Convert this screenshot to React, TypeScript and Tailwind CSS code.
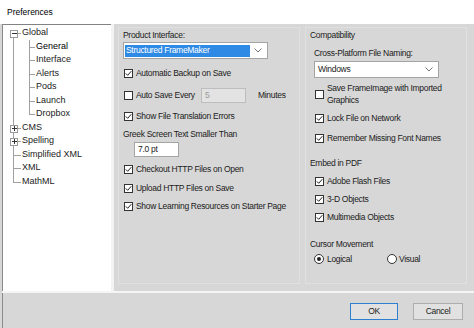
import type { ReactNode } from 'react';

const narrow = "font-['Liberation_Sans',sans-serif] text-[8.5px] tracking-[-0.3px]";

function Check({ checked }: { checked: boolean }) {
  return (
    <span className="w-[9px] h-[9px] border border-[#333] bg-white flex-shrink-0 flex items-center justify-center">
      {checked && (
        <svg width="7" height="7" viewBox="0 0 7 7">
          <path d="M0.8 3.4 L2.7 5.3 L6.3 1.2" fill="none" stroke="#222" strokeWidth="1" />
        </svg>
      )}
    </span>
  );
}

function CheckRow({ checked, children, className = '' }: { checked: boolean; children: ReactNode; className?: string }) {
  return (
    <div className={`flex items-center gap-[3px] h-[14px] ml-[1px] ${className}`}>
      <Check checked={checked} />
      <span className="leading-none whitespace-nowrap">{children}</span>
    </div>
  );
}

function Chevron() {
  return (
    <svg width="8" height="5" viewBox="0 0 8 5" className="flex-shrink-0">
      <path d="M0.5 0.5 L4 4 L7.5 0.5" fill="none" stroke="#777" strokeWidth="1" />
    </svg>
  );
}

function Radio({ on }: { on: boolean }) {
  return (
    <span className="w-[10px] h-[10px] rounded-full border border-[#333] bg-white flex-shrink-0 flex items-center justify-center">
      {on && <span className="w-[4px] h-[4px] rounded-full bg-[#222]" />}
    </span>
  );
}

type TreeItem = { label: string; level: 0 | 1; box?: '+' | '-'; first?: boolean; last?: boolean; selected?: boolean };

const tree: TreeItem[] = [
  { label: 'Global', level: 0, box: '-', first: true },
  { label: 'General', level: 1, first: true, selected: true },
  { label: 'Interface', level: 1 },
  { label: 'Alerts', level: 1 },
  { label: 'Pods', level: 1 },
  { label: 'Launch', level: 1 },
  { label: 'Dropbox', level: 1, last: true },
  { label: 'CMS', level: 0, box: '+' },
  { label: 'Spelling', level: 0, box: '+' },
  { label: 'Simplified XML', level: 0 },
  { label: 'XML', level: 0 },
  { label: 'MathML', level: 0, last: true },
];

function TreeLines({ item }: { item: TreeItem }) {
  const w = item.level === 0 ? 19 : 33;
  const mid = 6.5;
  return (
    <svg width={w} height="13.5" className="flex-shrink-0 overflow-visible" shapeRendering="crispEdges">
      {/* trunk line */}
      <line
        x1="10.5"
        x2="10.5"
        y1={item.first && item.level === 0 ? mid : 0}
        y2={item.last && item.level === 0 ? mid : 14}
        stroke="#a0a0a0"
      />
      {item.level === 0 && <line x1="10" x2="18" y1={mid + 0.5} y2={mid + 0.5} stroke="#a0a0a0" />}
      {item.level === 1 && (
        <>
          <line x1="26.5" x2="26.5" y1="0" y2={item.last ? mid : 14} stroke="#a0a0a0" />
          <line x1="26" x2="32" y1={mid + 0.5} y2={mid + 0.5} stroke="#a0a0a0" />
        </>
      )}
      {item.box && (
        <>
          <rect x="7.5" y={mid - 2.5} width="7" height="7" fill="white" stroke="#9a9a9a" />
          <line x1="9" x2="14" y1={mid + 1} y2={mid + 1} stroke="#333" />
          {item.box === '+' && <line x1="11.5" x2="11.5" y1={mid - 1.5} y2={mid + 3.5} stroke="#333" />}
        </>
      )}
    </svg>
  );
}

export default function App() {
  return (
    <div className="w-[474px] h-[328px] bg-[#d7d7d7] flex flex-col overflow-hidden text-[#1b1b1b]">
      {/* Title bar */}
      <div className="h-[24px] bg-white flex items-center pl-[7px] font-['Liberation_Sans',sans-serif] text-[8.5px] text-black">
        Preferences
      </div>

      {/* Body */}
      <div className="flex h-[267px] border-l border-[#8a8a8a] ml-[2px]">
        {/* Tree */}
        <div className="w-[108px] bg-white border-t border-[#828282] pt-[1px] font-['Liberation_Sans',sans-serif] text-[9px]">
          {tree.map((item) => (
            <div key={item.label} className="flex items-center h-[13.5px]">
              <TreeLines item={item} />
              <span className={`leading-none whitespace-nowrap ${item.selected ? 'text-black font-medium' : 'text-[#222]'}`}>
                {item.label}
              </span>
            </div>
          ))}
        </div>
        <div className="w-[3px] bg-[#f3f3f3]" />

        {/* Settings panel */}
        <div className={`flex-1 flex gap-[5px] pl-[4px] pt-[3px] ${narrow}`}>
          {/* Left column */}
          <div className="w-[182px] h-[257px] border border-[#e0e0e0] pl-[4px] pt-[1px] flex flex-col">
            <div className="h-[12px] flex items-center">Product Interface:</div>
            <div className="mt-[1px] w-[145px] h-[17px] bg-white border border-[#a4a4a4] flex items-center pl-[1px] pr-[5px] gap-[4px]">
              <div className="flex-1 h-[12px] bg-[#2f8ae6] text-white flex items-center pl-[1px] leading-none">
                Structured FrameMaker
              </div>
              <Chevron />
            </div>
            <CheckRow checked className="mt-[7px]">Automatic Backup on Save</CheckRow>
            <div className="mt-[7px] h-[16px] flex items-center ml-[1px]">
              <Check checked={false} />
              <span className="ml-[3px] w-[65px] leading-none whitespace-nowrap">Auto Save Every</span>
              <div className="w-[45px] h-[15px] border border-[#bdbdbd] bg-[#e3e3e3] text-[#9a9a9a] flex items-center pl-[3px] leading-none">
                5
              </div>
              <span className="ml-[12px] leading-none whitespace-nowrap">Minutes</span>
            </div>
            <CheckRow checked className="mt-[6px]">Show File Translation Errors</CheckRow>
            <div className="mt-[5px] h-[12px] flex items-center whitespace-nowrap">Greek Screen Text Smaller Than</div>
            <div className="mt-[2px] ml-[11px] w-[45px] h-[15px] bg-white border border-[#a4a4a4] flex items-center pl-[3px] leading-none">
              7.0 pt
            </div>
            <CheckRow checked className="mt-[5px]">Checkout HTTP Files on Open</CheckRow>
            <CheckRow checked className="mt-[5px]">Upload HTTP Files on Save</CheckRow>
            <CheckRow checked className="mt-[4px]">Show Learning Resources on Starter Page</CheckRow>
          </div>

          {/* Right column */}
          <div className="w-[162px] h-[257px] border border-[#e0e0e0] pl-[4px] pt-[1px] flex flex-col">
            <div className="h-[12px] flex items-center">Compatibility</div>
            <div className="ml-[4px] flex flex-col">
              <div className="mt-[6px] h-[12px] flex items-center whitespace-nowrap">Cross-Platform File Naming:</div>
              <div className="mt-[2px] w-[125px] h-[17px] bg-white border border-[#a4a4a4] flex items-center pl-[3px] pr-[5px]">
                <span className="flex-1 leading-none">Windows</span>
                <Chevron />
              </div>
              <div className="mt-[4px] h-[24px] flex items-center gap-[3px] ml-[1px]">
                <Check checked={false} />
                <span className="leading-[12px]">
                  Save FrameImage with Imported
                  <br />
                  Graphics
                </span>
              </div>
              <CheckRow checked className="mt-[5px]">Lock File on Network</CheckRow>
              <CheckRow checked className="mt-[6px]">Remember Missing Font Names</CheckRow>
            </div>
            <div className="mt-[12px] h-[12px] flex items-center">Embed in PDF</div>
            <div className="ml-[4px] flex flex-col">
              <CheckRow checked className="mt-[5px]">Adobe Flash Files</CheckRow>
              <CheckRow checked className="mt-[4px]">3-D Objects</CheckRow>
              <CheckRow checked className="mt-[4px]">Multimedia Objects</CheckRow>
            </div>
            <div className="mt-[14px] h-[12px] flex items-center">Cursor Movement</div>
            <div className="mt-[2px] ml-[4px] h-[14px] flex items-center">
              <div className="w-[73px] flex items-center gap-[3px]">
                <Radio on />
                <span className="leading-none">Logical</span>
              </div>
              <div className="flex items-center gap-[2px]">
                <Radio on={false} />
                <span className="leading-none">Visual</span>
              </div>
            </div>
          </div>
        </div>
      </div>

      {/* Button bar */}
      <div className="h-[2px] bg-[#f5f5f5] ml-[2px]" />
      <div className={`flex-1 ml-[2px] border-l border-[#8a8a8a] flex justify-end items-start pt-[10px] pr-[11px] gap-[15px] ${narrow}`}>
        <button className="w-[48px] h-[17px] border border-[#2f7fd0] bg-[#e1e1e1] leading-none flex items-center justify-center">
          OK
        </button>
        <button className="w-[50px] h-[17px] border border-[#adadad] bg-[#e1e1e1] leading-none flex items-center justify-center">
          Cancel
        </button>
      </div>
    </div>
  );
}
